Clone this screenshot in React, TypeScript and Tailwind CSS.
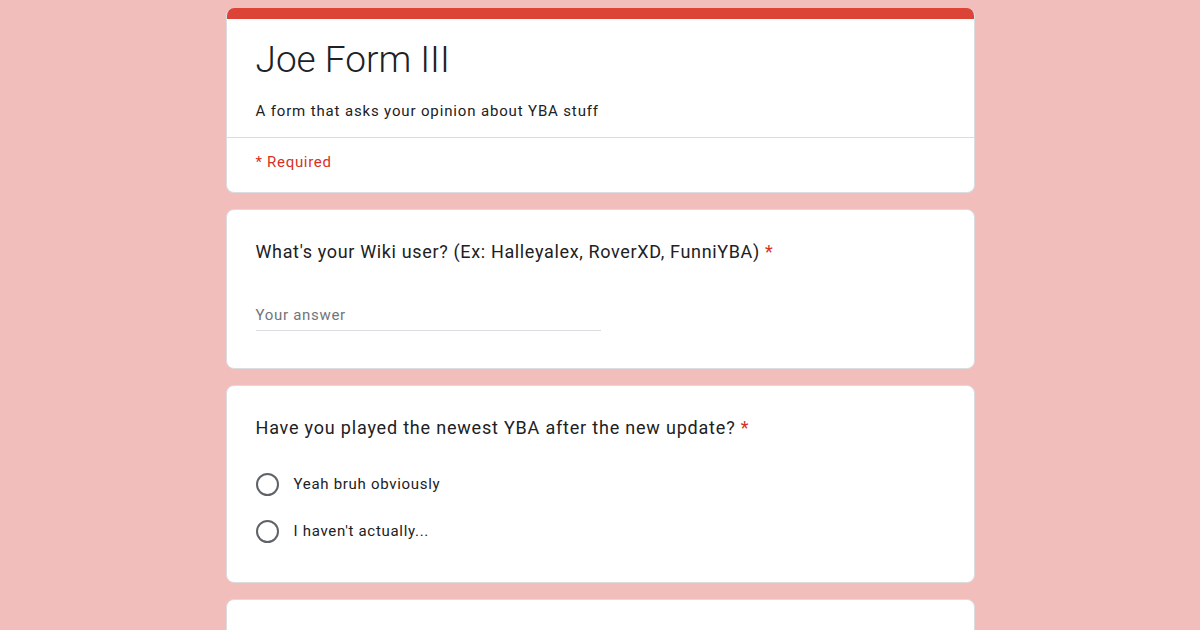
import React from "react";

function Radio({ label }: { label: string }) {
  return (
    <label className="flex items-center h-[47px] cursor-pointer">
      <span className="w-[23px] h-[23px] rounded-full border-2 border-[#5f6368] shrink-0" />
      <span className="ml-[15px] text-[15px] text-[#202124] tracking-[0.7px]">{label}</span>
    </label>
  );
}

export default function App() {
  return (
    <div
      className="w-[1200px] h-[630px] overflow-hidden bg-[#f2bebb]"
      style={{ fontFamily: "Roboto, 'Liberation Sans', sans-serif" }}
    >
      <div className="w-[749px] mx-auto pt-[8px] flex flex-col gap-[16px]">
        {/* Header */}
        <div className="bg-white rounded-[8px] border border-[#dadce0] border-t-0 overflow-hidden">
          <div className="h-[11px] bg-[#db4437]" />
          <div className="px-[29px] pt-[19px] pb-[16px] border-b border-[#dadce0]">
            <h1 className="text-[37px] leading-[44px] text-[#202124] font-light">Joe Form III</h1>
            <p className="mt-[19px] text-[15px] leading-[20px] text-[#202124] tracking-[0.85px]">
              A form that asks your opinion about YBA stuff
            </p>
          </div>
          <div className="px-[29px] pt-[14px] pb-[20px] text-[15px] leading-[20px] text-[#d93025] tracking-[0.7px]">
            * Required
          </div>
        </div>

        {/* Question 1 */}
        <div className="bg-white rounded-[8px] border border-[#dadce0] px-[29px] pt-[30px] pb-[37px]">
          <div className="text-[18px] leading-[24px] text-[#202124] tracking-[0.65px]">
            What's your Wiki user? (Ex: Halleyalex, RoverXD, FunniYBA) <span className="text-[#d93025]">*</span>
          </div>
          <div className="mt-[39px] w-[345px] border-b border-[#dadce0] pb-[3px]">
            <span className="text-[15px] leading-[20px] text-[#70757a] tracking-[0.7px]">Your answer</span>
          </div>
        </div>

        {/* Question 2 */}
        <div className="bg-white rounded-[8px] border border-[#dadce0] px-[29px] pt-[30px] pb-[27px]">
          <div className="text-[18px] leading-[24px] text-[#202124] tracking-[0.8px]">
            Have you played the newest YBA after the new update? <span className="text-[#d93025]">*</span>
          </div>
          <div className="mt-[21px] flex flex-col">
            <Radio label="Yeah bruh obviously" />
            <Radio label="I haven't actually..." />
          </div>
        </div>

        {/* Next question (cut off) */}
        <div className="bg-white rounded-[8px] border border-[#dadce0] h-[120px]" />
      </div>
    </div>
  );
}
